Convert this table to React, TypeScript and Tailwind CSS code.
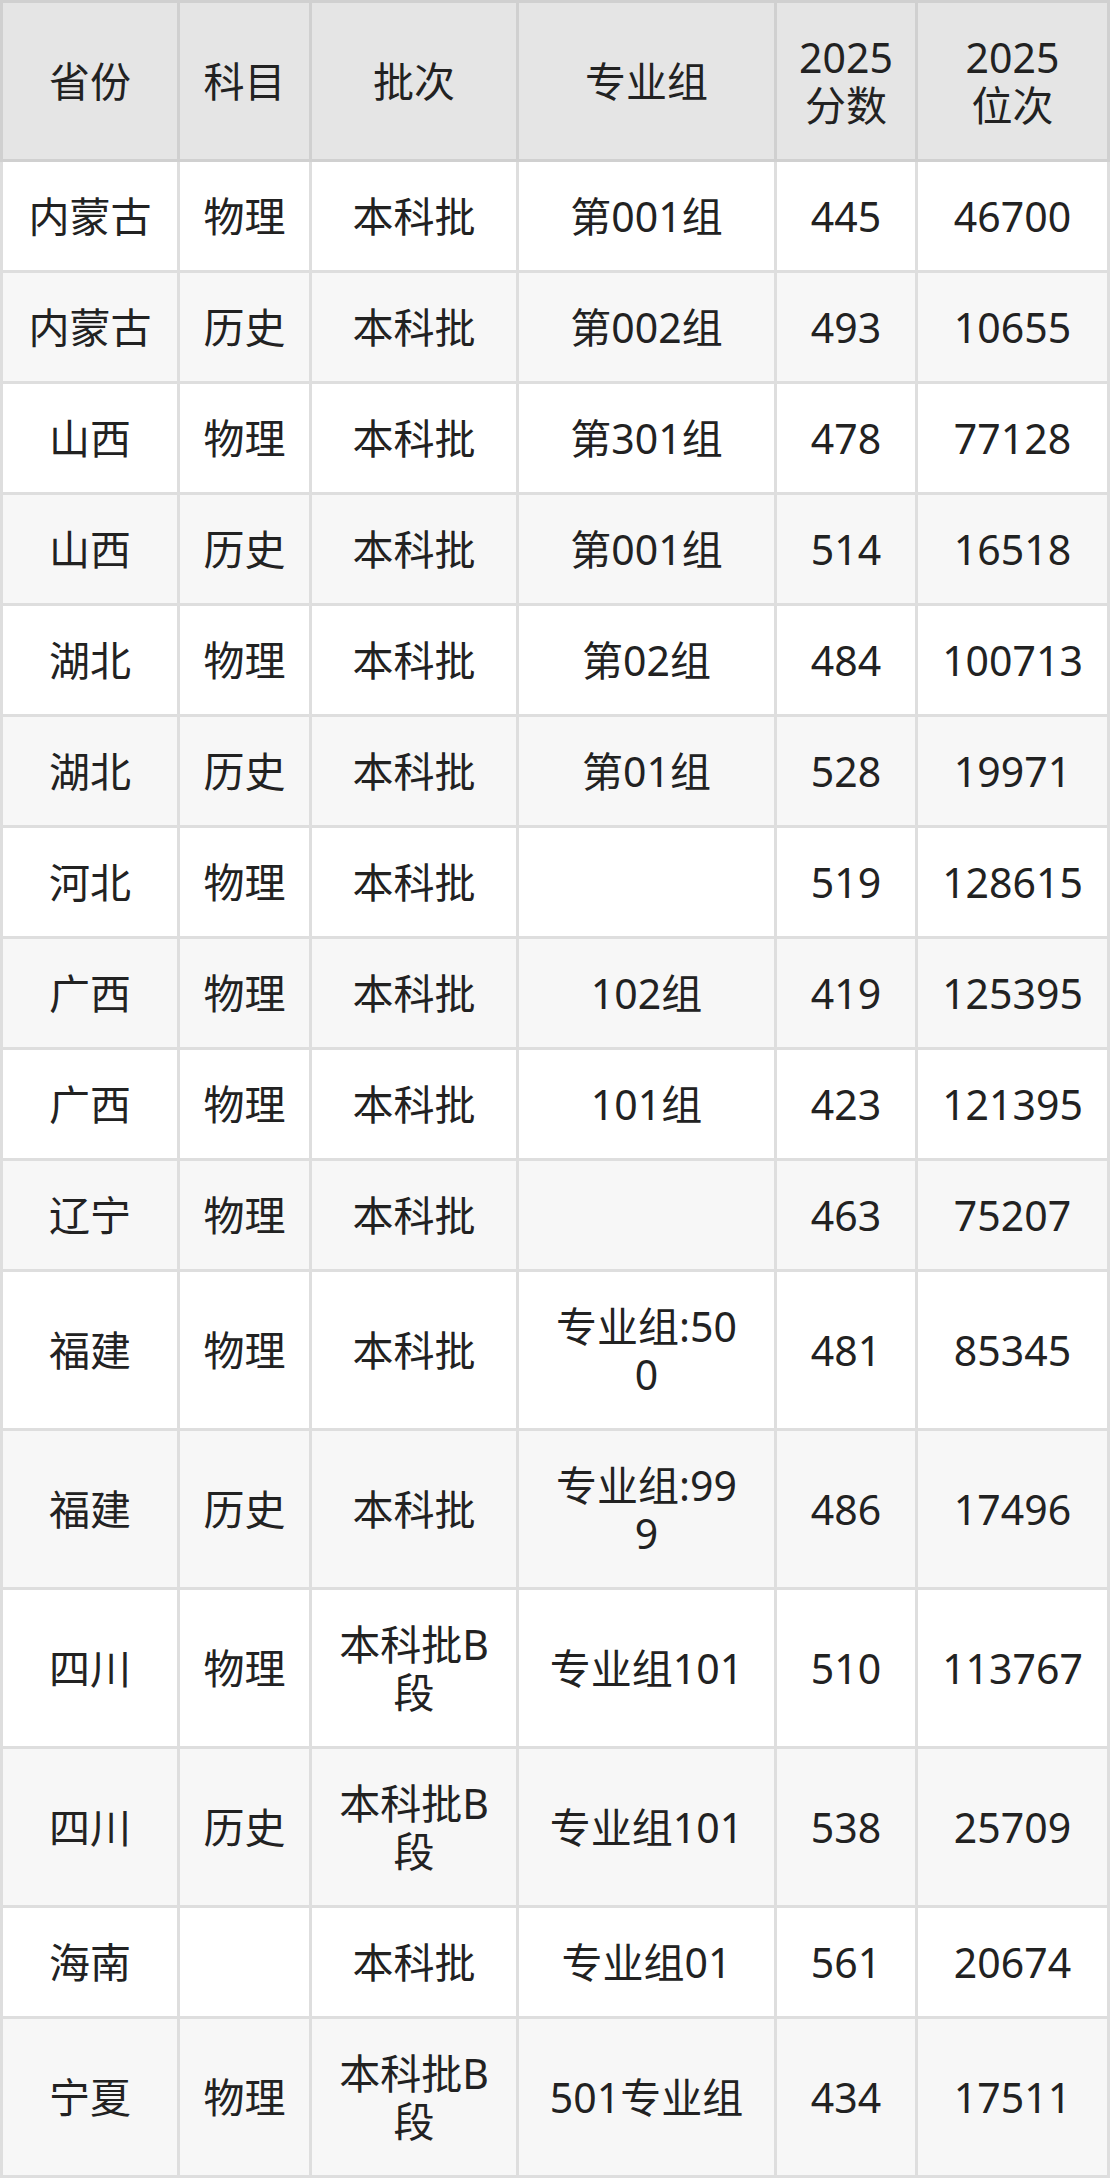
import React from 'react';

// 2025 录取分数 table
type Row = {
  prov: string;
  subj: string;
  batch: React.ReactNode;
  group: React.ReactNode;
  score: string;
  rank: string;
  tall?: boolean;
};

const ROWS: Row[] = [
  { prov: '内蒙古', subj: '物理', batch: '本科批', group: '第001组', score: '445', rank: '46700' },
  { prov: '内蒙古', subj: '历史', batch: '本科批', group: '第002组', score: '493', rank: '10655' },
  { prov: '山西', subj: '物理', batch: '本科批', group: '第301组', score: '478', rank: '77128' },
  { prov: '山西', subj: '历史', batch: '本科批', group: '第001组', score: '514', rank: '16518' },
  { prov: '湖北', subj: '物理', batch: '本科批', group: '第02组', score: '484', rank: '100713' },
  { prov: '湖北', subj: '历史', batch: '本科批', group: '第01组', score: '528', rank: '19971' },
  { prov: '河北', subj: '物理', batch: '本科批', group: '', score: '519', rank: '128615' },
  { prov: '广西', subj: '物理', batch: '本科批', group: '102组', score: '419', rank: '125395' },
  { prov: '广西', subj: '物理', batch: '本科批', group: '101组', score: '423', rank: '121395' },
  { prov: '辽宁', subj: '物理', batch: '本科批', group: '', score: '463', rank: '75207' },
  { prov: '福建', subj: '物理', batch: '本科批', group: <>专业组:50<br />0</>, score: '481', rank: '85345', tall: true },
  { prov: '福建', subj: '历史', batch: '本科批', group: <>专业组:99<br />9</>, score: '486', rank: '17496', tall: true },
  { prov: '四川', subj: '物理', batch: <>本科批B<br />段</>, group: '专业组101', score: '510', rank: '113767', tall: true },
  { prov: '四川', subj: '历史', batch: <>本科批B<br />段</>, group: '专业组101', score: '538', rank: '25709', tall: true },
  { prov: '海南', subj: '', batch: '本科批', group: '专业组01', score: '561', rank: '20674' },
  { prov: '宁夏', subj: '物理', batch: <>本科批B<br />段</>, group: '501专业组', score: '434', rank: '17511', tall: true },
];

const cols = 'grid grid-cols-[174px_129px_204px_255px_138px_189px] gap-x-[3px]';

export default function App() {
  return (
    <div
      className="w-[1110px] text-[41px] leading-[48px] text-[#222222]"
      style={{ fontFamily: '"Noto Sans", "Noto Sans CJK SC", sans-serif' }}
    >
      {/* header */}
      <div className={`${cols} bg-[#d0d0d0] p-[3px]`}>
        {['省份', '科目', '批次', '专业组'].map((h) => (
          <div key={h} className="h-[156px] bg-[#e5e5e5] flex items-center justify-center text-center">
            {h}
          </div>
        ))}
        <div className="h-[156px] bg-[#e5e5e5] flex items-center justify-center text-center">
          2025<br />分数
        </div>
        <div className="h-[156px] bg-[#e5e5e5] flex items-center justify-center text-center">
          2025<br />位次
        </div>
      </div>

      {/* body */}
      <div className={`${cols} gap-y-[3px] bg-[#dedede] px-[3px] pb-[3px]`}>
        {ROWS.map((r, i) => {
          const cell = `${r.tall ? 'h-[156px]' : 'h-[108px]'} ${i % 2 ? 'bg-[#f7f7f7]' : 'bg-white'} flex items-center justify-center text-center`;
          return (
            <React.Fragment key={i}>
              <div className={cell}>{r.prov}</div>
              <div className={cell}>{r.subj}</div>
              <div className={cell}>{r.batch}</div>
              <div className={cell}>{r.group}</div>
              <div className={cell}>{r.score}</div>
              <div className={cell}>{r.rank}</div>
            </React.Fragment>
          );
        })}
      </div>
    </div>
  );
}
